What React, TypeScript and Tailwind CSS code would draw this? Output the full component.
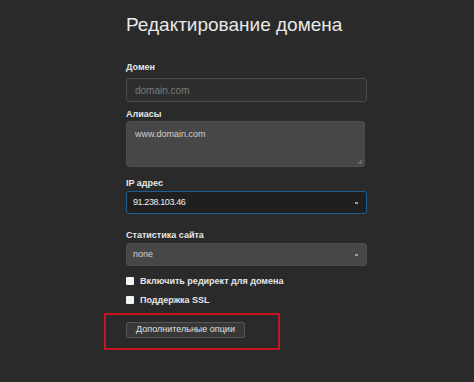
import type { ReactNode } from 'react'

const font = { fontFamily: '"Liberation Sans", Arial, sans-serif' }

function Label({ children }: { children: ReactNode }) {
  return <div className="text-[9px] font-bold leading-[12px] text-[#e6e6e6]">{children}</div>
}

function Caret() {
  return <span className="absolute right-[8px] top-1/2 -translate-y-1/2 h-[2px] w-[3px] bg-[#9a9a9a]" />
}

export default function App() {
  return (
    <div className="min-h-[382px] w-[474px] bg-[#2a2a2a] pl-[126px]" style={font}>
      <div className="w-[241px] pt-[14px]">
        <h1 className="text-[19px] leading-[22px] text-[#e8e8e8]">Редактирование домена</h1>

        {/* Домен */}
        <div className="mt-[25px]">
          <Label>Домен</Label>
          <div className="mt-[5px] flex h-[24px] items-center rounded-[3px] border border-[#4a4a4a] bg-[#2e2e2e] px-[8px] text-[10px] text-[#7a7a7a]">
            domain.com
          </div>
        </div>

        {/* Алиасы */}
        <div className="mt-[6px]">
          <Label>Алиасы</Label>
          <div className="relative mt-[1px] h-[46px] w-[239px] rounded-[3px] border border-[#4e4e4e] bg-[#474747] px-[8px] pt-[6px] text-[9px] text-[#d0d0d0]">
            www.domain.com
            <svg className="absolute bottom-[1px] right-[1px]" width="6" height="6" viewBox="0 0 6 6">
              <path d="M5 1 L1 5 M5 3 L3 5" stroke="#9a9a9a" strokeWidth="0.8" />
            </svg>
          </div>
        </div>

        {/* IP адрес */}
        <div className="mt-[10px]">
          <Label>IP адрес</Label>
          <div className="relative mt-[2px] flex h-[23px] items-center rounded-[3px] border border-[#1d5f93] bg-[#1f1f1f] px-[6px] text-[9px] tracking-[-0.4px] text-[#f0f0f0]">
            91.238.103.46
            <Caret />
          </div>
        </div>

        {/* Статистика */}
        <div className="mt-[15px]">
          <Label>Статистика сайта</Label>
          <div className="relative mt-[2px] flex h-[23px] items-center rounded-[3px] border border-[#4e4e4e] bg-[#474747] px-[6px] text-[9px] text-[#d0d0d0]">
            none
            <Caret />
          </div>
        </div>

        <div className="mt-[9px] flex items-center gap-[6px] leading-[12px]">
          <span className="h-[8px] w-[8px] rounded-[1px] bg-[#f4f4f4]" />
          <span className="text-[9px] font-bold text-[#e6e6e6]">Включить редирект для домена</span>
        </div>
        <div className="mt-[7px] flex items-center gap-[6px] leading-[12px]">
          <span className="h-[8px] w-[8px] rounded-[1px] bg-[#f4f4f4]" />
          <span className="text-[9px] font-bold text-[#e6e6e6]">Поддержка SSL</span>
        </div>

        {/* выделено красной рамкой */}
        <div className="-ml-[22px] mt-[7px] w-[176px] border-2 border-[#c8141c] px-[20px] pb-[10px] pt-[7px]">
          <button className="flex h-[16px] w-[119px] items-center justify-center rounded-[2px] border border-[#555] bg-[#383838] text-[9px] text-[#e0e0e0]">
            Дополнительные опции
          </button>
        </div>
      </div>
    </div>
  )
}
